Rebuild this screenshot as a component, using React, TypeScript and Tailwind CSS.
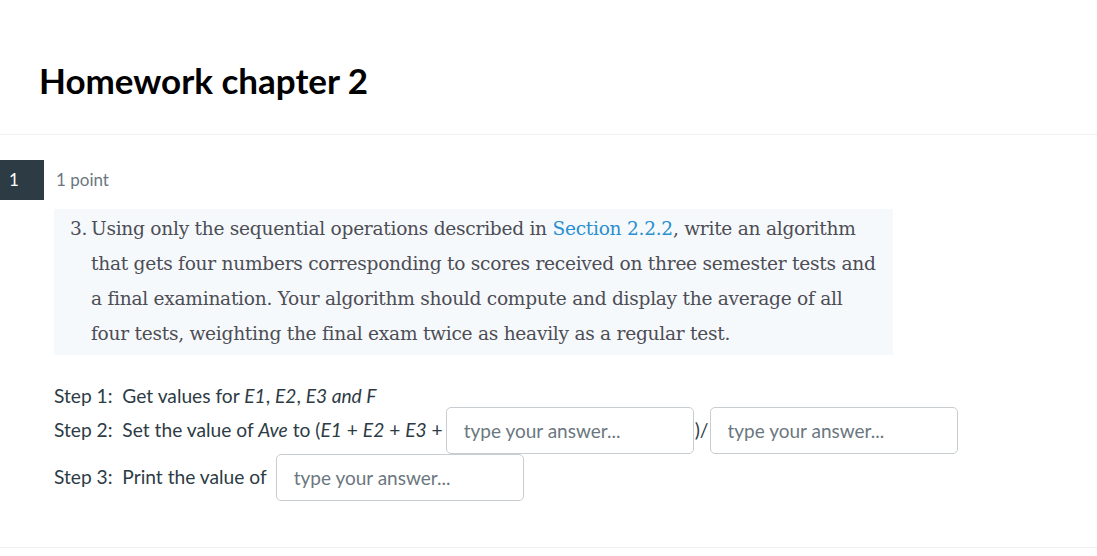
import React from "react";

function AnswerInput({ className = "" }: { className?: string }) {
  return (
    <input
      type="text"
      placeholder="type your answer..."
      className={
        "h-[47px] w-[248px] rounded-[5px] border border-[#c7cdd1] bg-white px-[17px] text-[19px] text-[#2d3b45] placeholder:text-[#6b7780] outline-none " +
        className
      }
      style={{ fontFamily: "Lato, sans-serif" }}
    />
  );
}

export default function App() {
  return (
    <div className="min-h-[556px] w-full bg-white" style={{ fontFamily: "Lato, sans-serif" }}>
      <div className="px-[39px] pt-[60px] pb-[34px]">
        <h1 className="text-[35px] font-bold leading-[40px] text-black">Homework chapter 2</h1>
      </div>
      <div className="h-px w-full bg-[#eef0f1]" />
      <div className="flex pt-[25px]">
        <div className="flex h-[40px] w-[44px] shrink-0 items-center bg-[#2d3b45] pl-[9px] text-[17px] text-white">1</div>
        <div className="flex-1 pl-[10px]">
          <div className="flex h-[40px] items-center pl-[2px] text-[17px] text-[#6b7780]">1 point</div>
          <div
            className="mt-[9px] w-[839px] whitespace-nowrap bg-[#f6f9fc] pt-[2px] pb-[4px] pl-[16px] text-[18.6px] leading-[35px] tracking-[-0.27px] text-[#4d4d55]"
            style={{ fontFamily: "'DejaVu Serif', serif" }}
          >
            <div className="flex">
              <span className="w-[21px] shrink-0">3.</span>
              <div>
                Using only the sequential operations described in{" "}
                <span className="text-[#2a8fd0]">Section 2.2.2</span>, write an algorithm
                <br />
                that gets four numbers corresponding to scores received on three semester tests and
                <br />
                a final examination. Your algorithm should compute and display the average of all
                <br />
                four tests, weighting the final exam twice as heavily as a regular test.
              </div>
            </div>
          </div>
          <div className="mt-[30px] text-[19.2px] text-[#2d3b45]">
            <div className="h-[22px] leading-[22px]">
              Step 1:&nbsp; Get values for <i>E1</i>, <i>E2</i>, <i>E3 and F</i>
            </div>
            <div className="flex items-center">
              <span>
                Step 2:&nbsp; Set the value of <i>Ave</i> to (<i>E1</i> + <i>E2</i> + <i>E3</i> +
              </span>
              <AnswerInput className="ml-[3px]" />
              <span className="px-[1px]">)/</span>
              <AnswerInput />
            </div>
            <div className="flex items-center">
              <span>Step 3:&nbsp; Print the value of</span>
              <AnswerInput className="ml-[9px]" />
            </div>
          </div>
        </div>
      </div>
      <div className="mt-[46px] h-px w-full bg-[#eef0f1]" />
    </div>
  );
}
